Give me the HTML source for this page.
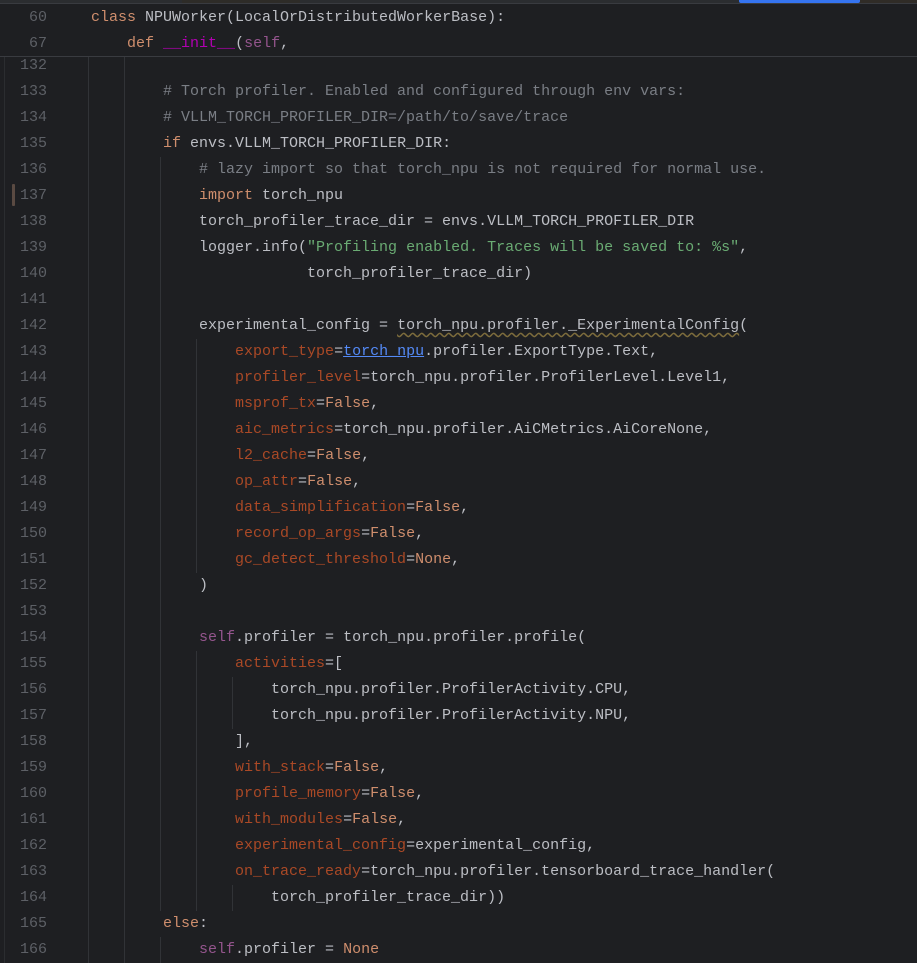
<!DOCTYPE html>
<html><head><meta charset="utf-8"><style>
html,body{margin:0;padding:0;width:917px;height:963px;overflow:hidden;background:#1e1f22;}
body{position:relative;font-family:"Liberation Mono",monospace;font-size:15px;color:#bcbec4;}
.l{position:absolute;left:91px;height:26px;line-height:26px;white-space:pre;}
.n{position:absolute;left:0;width:47px;text-align:right;height:26px;line-height:26px;color:#5d6066;}
.k{color:#cf8e6d}.c{color:#7a7e85}.s{color:#6aab73}.p{color:#aa4926}.sf{color:#94558d}.d{color:#b200b2}
.lk{color:#548af7;text-decoration:underline;}
.w{text-decoration:underline wavy #7d6c3c;text-underline-offset:3px;}
.g{position:absolute;width:1px;background:#313337;}
#hdr{position:absolute;left:0;top:0;width:917px;height:56px;background:#1e1f22;border-bottom:1px solid #393b40;z-index:5;}
</style></head><body>
<div class="g" style="left:4px;top:56px;height:907px;background:#2b2d30"></div>
<div class="g" style="left:88px;top:56px;height:907px"></div>
<div class="g" style="left:124px;top:56px;height:907px"></div>
<div class="g" style="left:160px;top:157px;height:754px"></div>
<div class="g" style="left:160px;top:937px;height:26px"></div>
<div class="g" style="left:196px;top:339px;height:234px"></div>
<div class="g" style="left:196px;top:651px;height:260px"></div>
<div class="g" style="left:232px;top:677px;height:52px"></div>
<div class="g" style="left:232px;top:885px;height:26px"></div>
<div style="position:absolute;left:12px;top:184px;width:3px;height:22px;background:#5a4a42;border-radius:1px"></div>

<div class="n" style="top:53px">132</div>
<div class="n" style="top:79px">133</div><div class="l c" style="top:79px">        # Torch profiler. Enabled and configured through env vars:</div>
<div class="n" style="top:105px">134</div><div class="l c" style="top:105px">        # VLLM_TORCH_PROFILER_DIR=/path/to/save/trace</div>
<div class="n" style="top:131px">135</div><div class="l" style="top:131px">        <span class="k">if</span> envs.VLLM_TORCH_PROFILER_DIR:</div>
<div class="n" style="top:157px">136</div><div class="l c" style="top:157px">            # lazy import so that torch_npu is not required for normal use.</div>
<div class="n" style="top:183px">137</div><div class="l" style="top:183px">            <span class="k">import</span> torch_npu</div>
<div class="n" style="top:209px">138</div><div class="l" style="top:209px">            torch_profiler_trace_dir = envs.VLLM_TORCH_PROFILER_DIR</div>
<div class="n" style="top:235px">139</div><div class="l" style="top:235px">            logger.info(<span class="s">"Profiling enabled. Traces will be saved to: %s"</span>,</div>
<div class="n" style="top:261px">140</div><div class="l" style="top:261px">                        torch_profiler_trace_dir)</div>
<div class="n" style="top:287px">141</div>
<div class="n" style="top:313px">142</div><div class="l" style="top:313px">            experimental_config = <span class="w">torch_npu.profiler._ExperimentalConfig</span>(</div>
<div class="n" style="top:339px">143</div><div class="l" style="top:339px">                <span class="p">export_type</span>=<span class="lk">torch_npu</span>.profiler.ExportType.Text,</div>
<div class="n" style="top:365px">144</div><div class="l" style="top:365px">                <span class="p">profiler_level</span>=torch_npu.profiler.ProfilerLevel.Level1,</div>
<div class="n" style="top:391px">145</div><div class="l" style="top:391px">                <span class="p">msprof_tx</span>=<span class="k">False</span>,</div>
<div class="n" style="top:417px">146</div><div class="l" style="top:417px">                <span class="p">aic_metrics</span>=torch_npu.profiler.AiCMetrics.AiCoreNone,</div>
<div class="n" style="top:443px">147</div><div class="l" style="top:443px">                <span class="p">l2_cache</span>=<span class="k">False</span>,</div>
<div class="n" style="top:469px">148</div><div class="l" style="top:469px">                <span class="p">op_attr</span>=<span class="k">False</span>,</div>
<div class="n" style="top:495px">149</div><div class="l" style="top:495px">                <span class="p">data_simplification</span>=<span class="k">False</span>,</div>
<div class="n" style="top:521px">150</div><div class="l" style="top:521px">                <span class="p">record_op_args</span>=<span class="k">False</span>,</div>
<div class="n" style="top:547px">151</div><div class="l" style="top:547px">                <span class="p">gc_detect_threshold</span>=<span class="k">None</span>,</div>
<div class="n" style="top:573px">152</div><div class="l" style="top:573px">            )</div>
<div class="n" style="top:599px">153</div>
<div class="n" style="top:625px">154</div><div class="l" style="top:625px">            <span class="sf">self</span>.profiler = torch_npu.profiler.profile(</div>
<div class="n" style="top:651px">155</div><div class="l" style="top:651px">                <span class="p">activities</span>=[</div>
<div class="n" style="top:677px">156</div><div class="l" style="top:677px">                    torch_npu.profiler.ProfilerActivity.CPU,</div>
<div class="n" style="top:703px">157</div><div class="l" style="top:703px">                    torch_npu.profiler.ProfilerActivity.NPU,</div>
<div class="n" style="top:729px">158</div><div class="l" style="top:729px">                ],</div>
<div class="n" style="top:755px">159</div><div class="l" style="top:755px">                <span class="p">with_stack</span>=<span class="k">False</span>,</div>
<div class="n" style="top:781px">160</div><div class="l" style="top:781px">                <span class="p">profile_memory</span>=<span class="k">False</span>,</div>
<div class="n" style="top:807px">161</div><div class="l" style="top:807px">                <span class="p">with_modules</span>=<span class="k">False</span>,</div>
<div class="n" style="top:833px">162</div><div class="l" style="top:833px">                <span class="p">experimental_config</span>=experimental_config,</div>
<div class="n" style="top:859px">163</div><div class="l" style="top:859px">                <span class="p">on_trace_ready</span>=torch_npu.profiler.tensorboard_trace_handler(</div>
<div class="n" style="top:885px">164</div><div class="l" style="top:885px">                    torch_profiler_trace_dir))</div>
<div class="n" style="top:911px">165</div><div class="l" style="top:911px">        <span class="k">else</span>:</div>
<div class="n" style="top:937px">166</div><div class="l" style="top:937px">            <span class="sf">self</span>.profiler = <span class="k">None</span></div>

<div id="hdr">
  <div style="position:absolute;left:0;top:0;width:917px;height:3px;background:#2b2d30;border-bottom:1px solid #393b40"></div>
  <div style="position:absolute;left:182px;top:0;width:118px;height:3px;background:#2e2c28"></div>
  <div style="position:absolute;left:739px;top:0;width:121px;height:3px;background:#3574f0;border-radius:0 0 2px 2px"></div>
  <div style="position:absolute;left:860px;top:0;width:57px;height:3px;background:#302c27"></div>
  <div class="n" style="top:5px">60</div><div class="l" style="top:5px"><span class="k">class</span> NPUWorker(LocalOrDistributedWorkerBase):</div>
  <div class="n" style="top:31px">67</div><div class="l" style="top:31px">    <span class="k">def</span> <span class="d">__init__</span>(<span class="sf">self</span>,</div>
</div>
</body></html>
